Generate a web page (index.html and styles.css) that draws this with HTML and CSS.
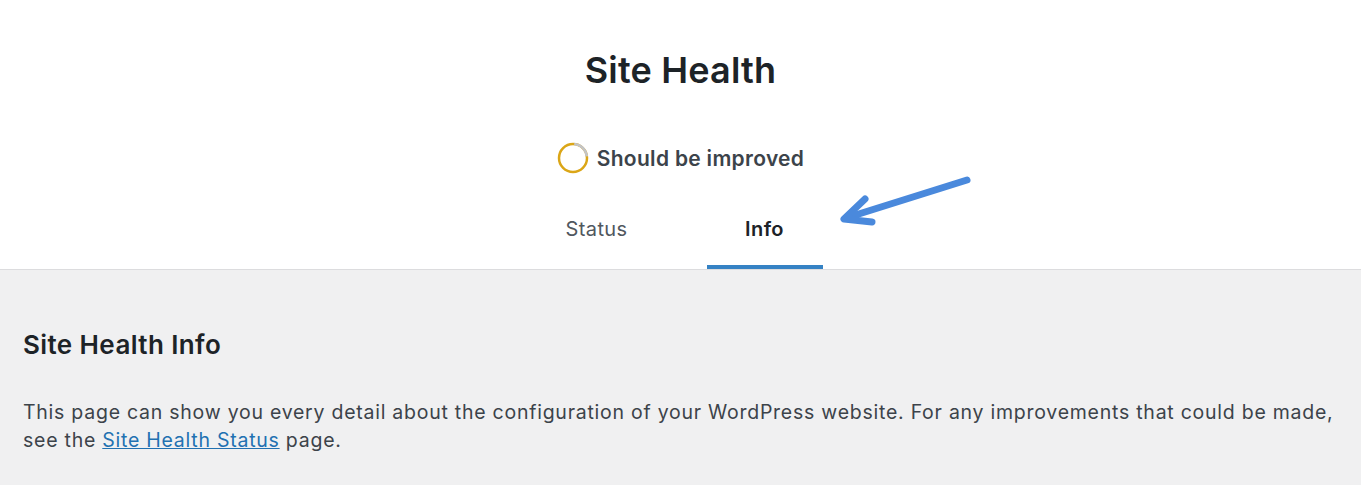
FILE: index.html
```html
<!DOCTYPE html>
<html lang="en">
<head>
    <meta charset="UTF-8">
    <meta name="viewport" content="width=device-width, initial-scale=1.0">
    <title>Site Health Info</title>
    <link rel="stylesheet" href="styles.css">
</head>
<body>
    <div class="health-header">
        <h1>Site Health</h1>
        <div class="health-status">
            <svg class="status-ring" width="32" height="32" viewBox="0 0 32 32">
                <circle cx="16" cy="16" r="14" fill="none" stroke="#dba617" stroke-width="2.5"/>
                <circle cx="16" cy="16" r="14" fill="none" stroke="#c3c4c7" stroke-width="2.5"
                        stroke-dasharray="19 69" transform="rotate(-85 16 16)"/>
            </svg>
            <span class="status-label">Should be improved</span>
        </div>
        <nav class="health-tabs">
            <a class="tab" href="#">Status</a>
            <a class="tab active" href="#">Info</a>
        </nav>
        <svg class="pointer-arrow" width="145" height="70" viewBox="0 0 145 70">
            <path d="M135 12 L14 50" stroke="#4a89dc" stroke-width="7" stroke-linecap="round" fill="none"/>
            <path d="M33 31 L12 51 L40 54" stroke="#4a89dc" stroke-width="7" stroke-linecap="round" stroke-linejoin="round" fill="none"/>
        </svg>
    </div>

    <div class="health-body">
        <h2>Site Health Info</h2>
        <p>This page can show you every detail about the configuration of your WordPress website. For any improvements that could be made, see the <a href="#">Site Health Status</a> page.</p>
    </div>
</body>
</html>
```

FILE: styles.css
```css
body {
    margin: 0;
    font-family: Inter, "Liberation Sans", sans-serif;
    background-color: #f0f0f1;
    color: #3c434a;
}
.health-header {
    position: relative;
    background-color: #ffffff;
    border-bottom: 1px solid #dcdcde;
    text-align: center;
    padding-top: 50px;
}
.health-header h1 {
    margin: 0;
    font-size: 36px;
    line-height: 40px;
    font-weight: 600;
    letter-spacing: 0.2px;
    color: #1d2327;
}
.health-status {
    display: flex;
    justify-content: center;
    align-items: center;
    gap: 8px;
    margin-top: 53px;
    height: 30px;
}
.status-ring {
    display: block;
}
.status-label {
    font-size: 21px;
    font-weight: 600;
    letter-spacing: 0.3px;
    color: #3c434a;
}
.health-tabs {
    display: flex;
    justify-content: center;
    margin-top: 23px;
}
.tab {
    display: block;
    width: 116px;
    padding: 21px 0 24px;
    line-height: 24px;
    font-size: 20px;
    letter-spacing: 0.4px;
    color: #50575e;
    text-decoration: none;
    border-bottom: 4px solid transparent;
    margin: 0 26px;
}
.tab.active {
    font-weight: 600;
    color: #1d2327;
    border-bottom-color: #3582c4;
}
.pointer-arrow {
    position: absolute;
    left: 832px;
    top: 168px;
}
.health-body {
    padding: 0 10px 0 23px;
}
.health-body h2 {
    margin: 58px 0 0;
    font-size: 26px;
    line-height: 34px;
    font-weight: 600;
    letter-spacing: 0.4px;
    color: #1d2327;
}
.health-body p {
    margin: 36px 0 0;
    font-size: 19.5px;
    line-height: 28px;
    letter-spacing: 0.75px;
}
.health-body a {
    color: #2271b1;
}
```
